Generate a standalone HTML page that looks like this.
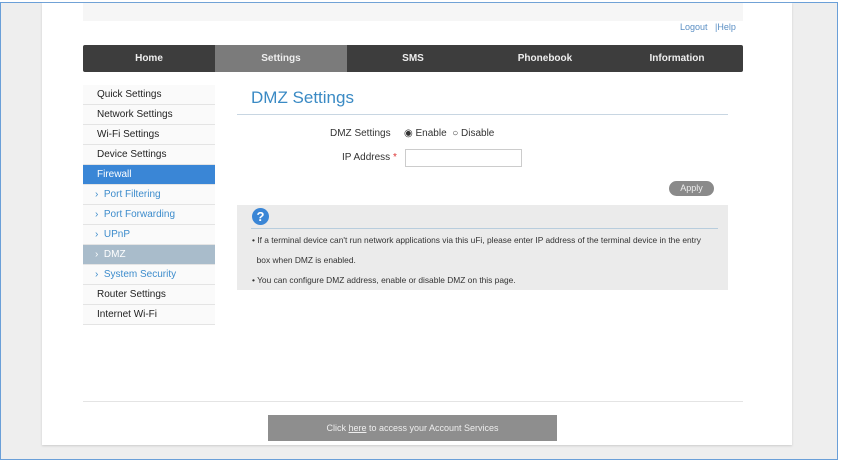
<!DOCTYPE html>
<html><head><style>
body{margin:0;width:847px;height:470px;background:#fff;font-family:"Liberation Sans",Arial,sans-serif;position:relative;overflow:hidden}
.frame{position:absolute;left:0;top:2px;width:836px;height:456px;border:1px solid #6a9fd8;background:#eeeeee}
.panel{position:absolute;left:41px;top:0;width:750px;height:442px;background:#fff;box-shadow:0 1px 2px #ccc}
.a{position:absolute}
.nav{left:83px;top:45px;width:660px;height:27px;background:#3d3d3d;border-radius:2px;display:flex}
.nav div{flex:1;color:#eee;font-weight:bold;font-size:10px;text-align:center;line-height:27px}
.nav .act{background:#7b7b7b}
.side{left:83px;top:85px;width:132px}
.side div{height:19px;border-bottom:1px solid #e4e4e4;font-size:10px;line-height:19px;padding-left:14px;color:#222;background:#fafafa}
.side .sub{color:#3d8ccc;padding-left:12px}
.side .fw{background:#3a86d6;color:#fff}
.side .dmz{background:#a9bccb;color:#fff}
.lbl{font-size:10px;color:#333}
</style></head><body>
<div class="frame">
<div class="panel"></div>
</div>
<div class="a" style="left:83px;top:3px;width:660px;height:18px;background:#f6f6f6"></div>
<div class="a" style="left:680px;top:22px;font-size:9px;color:#5b8fc4">Logout &nbsp; |Help</div>
<div class="a nav"><div>Home</div><div class="act">Settings</div><div>SMS</div><div>Phonebook</div><div>Information</div></div>
<div class="a side">
<div>Quick Settings</div><div>Network Settings</div><div>Wi-Fi Settings</div><div>Device Settings</div>
<div class="fw">Firewall</div>
<div class="sub">›&nbsp; Port Filtering</div><div class="sub">›&nbsp; Port Forwarding</div><div class="sub">›&nbsp; UPnP</div>
<div class="sub dmz">›&nbsp; DMZ</div><div class="sub">›&nbsp; System Security</div>
<div>Router Settings</div><div>Internet Wi-Fi</div>
</div>
<div class="a" style="left:251px;top:88px;font-size:17px;color:#3a8ac4">DMZ Settings</div>
<div class="a" style="left:237px;top:114px;width:491px;height:1px;background:#c8d6e2"></div>
<div class="a lbl" style="left:330px;top:128px">DMZ Settings</div>
<div class="a lbl" style="left:404px;top:128px">◉ Enable &nbsp;○ Disable</div>
<div class="a lbl" style="left:342px;top:152px">IP Address <span style="color:#d33">*</span></div>
<div class="a" style="left:405px;top:149px;width:115px;height:16px;border:1px solid #ccc"></div>
<div class="a" style="left:669px;top:181px;width:45px;height:15px;border-radius:8px;background:#8a8a8a;color:#eee;font-size:9px;text-align:center;line-height:15px">Apply</div>
<div class="a" style="left:237px;top:205px;width:491px;height:85px;background:#ebebeb"></div>
<div class="a" style="left:252px;top:208px;width:17px;height:17px;border-radius:50%;background:#3a86d6;color:#fff;font-weight:bold;font-size:13px;text-align:center;line-height:17px">?</div>
<div class="a" style="left:251px;top:228px;width:467px;height:1px;background:#b8cddd"></div>
<div class="a" style="left:252px;top:230px;font-size:8.4px;color:#333;line-height:20px;white-space:nowrap">• If a terminal device can't run network applications via this uFi, please enter IP address of the terminal device in the entry<br>&nbsp; box when DMZ is enabled.<br>• You can configure DMZ address, enable or disable DMZ on this page.</div>
<div class="a" style="left:83px;top:401px;width:660px;height:1px;background:#e4e4e4"></div>
<div class="a" style="left:268px;top:415px;width:289px;height:26px;background:#8e8e8e;color:#eee;font-size:9px;text-align:center;line-height:26px">Click <u>here</u> to access your Account Services</div>
</body></html>
